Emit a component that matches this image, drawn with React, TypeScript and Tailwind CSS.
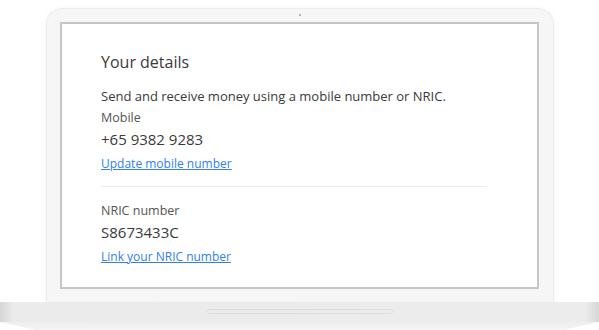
const font = { fontFamily: '"Open Sans", "Noto Sans", sans-serif' }

const Row = ({ label, value, link }: { label: string; value: string; link: string }) => (
  <>
    <p className="text-[12.5px] leading-[18px] text-[#555]">{label}</p>
    <p className="mt-px text-[15px] leading-[22px] text-[#3a3a3a]">{value}</p>
    <a href="#" className="mt-[4px] block w-fit text-[12px] leading-[20px] text-[#2f80ed] underline">
      {link}
    </a>
  </>
)

export default function App() {
  return (
    <div className="h-[330px] w-[599px] overflow-hidden bg-white" style={font}>
      <div className="flex flex-col items-center pt-[8px]">
        {/* lid */}
        <div className="flex h-[294px] w-[508px] flex-col items-center rounded-t-[16px] border border-b-0 border-[#ececec] bg-[#f6f6f6] px-[14px] shadow-[0_0_6px_rgba(0,0,0,0.04)]">
          <div className="mt-[5px] h-[2px] w-[2px] bg-[#b5b5b5]" />
          <div className="mt-[6px] h-[267px] w-[479px] border-2 border-[#c6c6c6] bg-white pl-[39px] pr-[50px] pt-[26px]">
            <h1 className="text-[16px] leading-[24px] text-[#3a3a3a]">Your details</h1>
            <p className="mt-[12px] text-[13px] leading-[20px] text-[#3a3a3a]">
              Send and receive money using a mobile number or NRIC.
            </p>
            <div className="mt-[3px]">
              <Row label="Mobile" value="+65 9382 9283" link="Update mobile number" />
            </div>
            <div className="mt-[12px] h-px bg-[#ebebeb]" />
            <div className="mt-[15px]">
              <Row label="NRIC number" value="S8673433C" link="Link your NRIC number" />
            </div>
          </div>
        </div>
      </div>
      {/* base */}
      <div className="relative flex h-[20px] items-start justify-center bg-[linear-gradient(to_right,#d6d6d6_0px,#ebebeb_14px,#ececec_585px,#d6d6d6_599px)] pt-[7px]">
        <div className="h-[5px] w-[186px] rounded-full border border-[#dcdcdc] bg-[#ebebeb]" />
      </div>
      <div className="h-[8px] bg-[linear-gradient(to_bottom,#eeeeee,#f4f4f4)] [clip-path:polygon(0_0,100%_0,94%_100%,6%_100%)]" />
    </div>
  )
}
